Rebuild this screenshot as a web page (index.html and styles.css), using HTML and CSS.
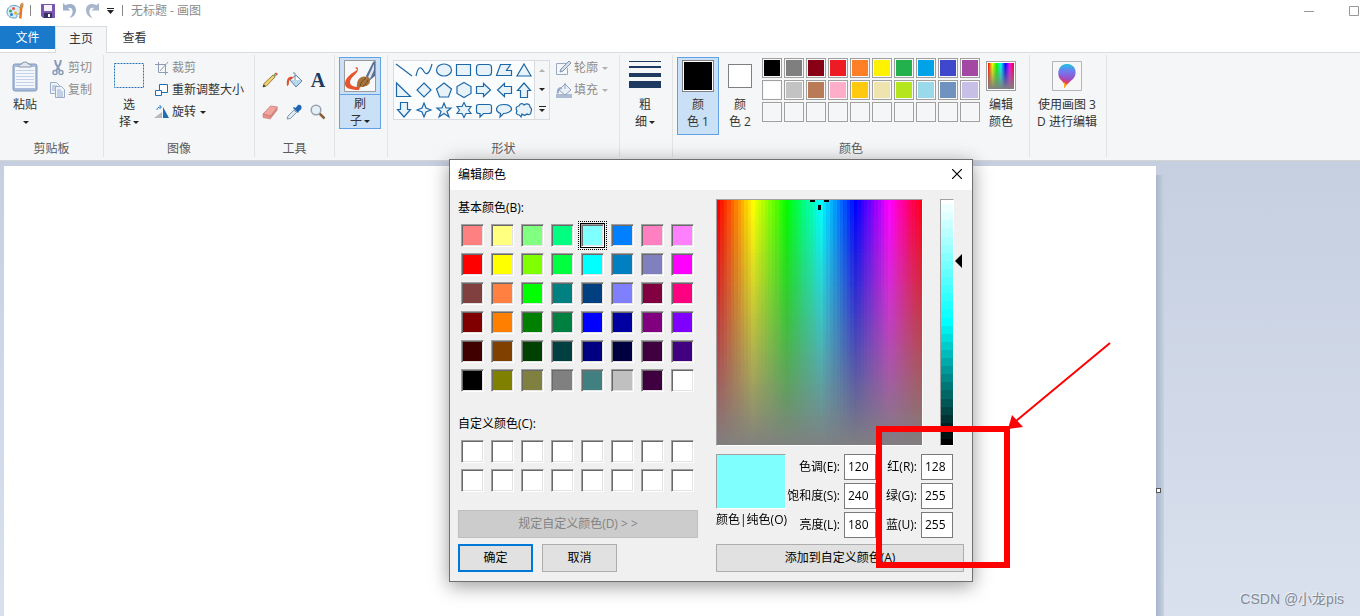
FILE: index.html
```html
<!DOCTYPE html>
<html lang="zh-CN">
<head>
    <meta charset="UTF-8">
    <meta name="viewport" content="width=device-width, initial-scale=1.0">
    <title>无标题 - 画图</title>
    <link rel="stylesheet" href="styles.css">
</head>
<body>
    <header class="titlebar">
        <svg class="app-icon" width="18" height="18" viewBox="0 0 18 18">
            <path d="M1 10C1 5.500 5 3 9 3.500c3.500.3 6 2.500 6 5.500 0 2-1.500 3-3 3-1.500.2-1.500 1-1 2 .3 1.500-1 2-3 2-4 0-7-2.500-7-6z" fill="#d7ecf8" stroke="#5f9cc4"/>
            <circle cx="4.500" cy="9" r="1.500" fill="#3aa657"/><circle cx="7.500" cy="6.500" r="1.500" fill="#e5533d"/>
            <circle cx="5.500" cy="12.500" r="1.500" fill="#2f7fd0"/><circle cx="9.500" cy="11" r="1.500" fill="#eab02d"/>
            <path d="M14 6l-1 10 2.500 1 1-11z" fill="#e57a22"/><path d="M13.500 6c0-3 1-5 3.500-5.500.8 2 .6 4-.2 5.500z" fill="#c98f55"/>
        </svg>
        <span class="title-sep"></span>
        <button class="quick" aria-label="保存">
            <svg width="14" height="14" viewBox="0 0 14 14"><path d="M0 0h14v14H2l-2-2z" fill="#7a57b0"/><path d="M3 1h8v6H3z" fill="#f4f1fa"/><path d="M3 9h8v5H3z" fill="#3a3060"/><path d="M7 10h2v3H7z" fill="#fff"/></svg>
        </button>
        <button class="quick" aria-label="撤消">
            <svg width="14" height="15" viewBox="0 0 14 15"><path d="M0 0l2.500 2.300C7-.5 13 1 13 7c0 4-2.500 7-6.500 8C9 12 10 10 9.500 7.500 9 5 6.500 4.500 5 5l2.500 2.500H0z" fill="#9fb0cd"/></svg>
        </button>
        <button class="quick" aria-label="重做">
            <svg width="14" height="15" viewBox="0 0 14 15"><path d="M14 0l-2.500 2.300C7-.5 1 1 1 7c0 4 2.500 7 6.500 8C5 12 4 10 4.500 7.500 5 5 7.500 4.500 9 5L6.500 7.500H14z" fill="#a9b6cc"/></svg>
        </button>
        <button class="quick quick-menu" aria-label="自定义快速访问工具栏">
            <svg width="7" height="6" viewBox="0 0 7 6"><path d="M0 0h7v1H0zM0 2h7L3.500 6z" fill="#222"/></svg>
        </button>
        <span class="title-sep"></span>
        <span class="window-title">无标题 - 画图</span>
        <div class="window-buttons">
            <button aria-label="最小化"><svg width="10" height="10" viewBox="0 0 10 10"><path d="M0 5h10v1H0z" fill="#999"/></svg></button>
            <button aria-label="最大化"><svg width="10" height="10" viewBox="0 0 10 10"><path d="M.5.5h9v9h-9z" fill="none" stroke="#999"/></svg></button>
        </div>
    </header>

    <nav class="tabs">
        <button class="tab tab-file">文件</button>
        <button class="tab tab-active">主页</button>
        <button class="tab">查看</button>
    </nav>

    <div class="ribbon">
        <section class="group group-clipboard">
            <div class="group-content">
                <button class="large">
                    <span class="large-icon">
                        <svg width="26" height="31" viewBox="0 0 26 31">
                            <rect x="1" y="3" width="24" height="27" rx="2" fill="#a9bbd8" stroke="#8199bf"/>
                            <path d="M3 6h20v21H3z" fill="#f3f7fc"/>
                            <path d="M4 9.500h18M4 12.500h18M4 15.500h18M4 18.500h18M4 21.500h18M4 24.500h18" stroke="#c3d2e7"/>
                            <path d="M7 6V4q0-1 3-1 0-2 3-2t3 2q3 0 3 1v2z" fill="#dfe6ef" stroke="#8696ae"/>
                        </svg>
                    </span>
                    粘贴<br><span class="caret"></span>
                </button>
                <div class="stack">
                    <button class="small" disabled>
                        <svg width="16" height="16" viewBox="0 0 16 16" fill="none" stroke="#8b9bb5"><path d="M5 0l1 4 4 7M11 0l-1 4-4 7" stroke-width="2"/><circle cx="5" cy="12.500" r="2" stroke-width="1.500"/><circle cx="11" cy="12.500" r="2" stroke-width="1.500"/></svg>
                        剪切
                    </button>
                    <button class="small" disabled>
                        <svg width="16" height="16" viewBox="0 0 16 16" fill="#eef3fa" stroke="#9aaccb"><path d="M.5.5h6l3 3v8h-9z"/><path d="M2 4h5M2 6h5M2 8h5"/><path d="M5.500 4.500h6l3 3v8h-9z"/><path d="M7 8h4M7 10h6M7 12h6M7 14h6"/></svg>
                        复制
                    </button>
                </div>
            </div>
            <h2 class="group-name">剪贴板</h2>
        </section>

        <section class="group group-image">
            <div class="group-content">
                <button class="large">
                    <span class="large-icon"><svg width="30" height="26" viewBox="0 0 30 26"><path d="M.5.5h29v24H.5z" fill="none" stroke="#2a74b4" stroke-dasharray="2 1"/></svg></span>
                    选<br>择<span class="caret"></span>
                </button>
                <div class="stack">
                    <button class="small" disabled>
                        <svg width="16" height="16" viewBox="0 0 16 16" fill="none" stroke="#8e9db5"><path d="M4.500 2v10.500H14M1 4.500h10.500V15M6 11l8-9"/></svg>
                        裁剪
                    </button>
                    <button class="small">
                        <svg width="16" height="16" viewBox="0 0 16 16" fill="#fff" stroke="#1f6fb3"><path d="M5.500 2.500h8v8h-8z"/><path d="M1.500 8.500h6v5h-6z"/></svg>
                        重新调整大小
                    </button>
                    <button class="small">
                        <svg width="16" height="16" viewBox="0 0 16 16"><path d="M0 14h8V8z" fill="#b4b9bf"/><path d="M9 3v11h6z" fill="#1f6fb3"/><path d="M3 6c0-2 1-3 4-3M5.500 1l2 2-2 2" fill="none" stroke="#2a82c9"/></svg>
                        旋转<span class="caret"></span>
                    </button>
                </div>
            </div>
            <h2 class="group-name">图像</h2>
        </section>

        <section class="group group-tools">
            <div class="tool-grid">
                <button aria-label="铅笔">
                    <svg width="16" height="16" viewBox="0 0 16 16"><path d="M1 15l1-3.500L11 3l2 2-8.500 9z" fill="#f0cf6b" stroke="#7a6a3a" stroke-width=".8"/><path d="M12.500 1.500l2 2L16 2l-2-1.500z" fill="#d9534a"/><path d="M11 3l2 2 1.500-1.500-2-2z" fill="#7fae6a"/><path d="M1 15l.8-2.500 1.700 1.700z" fill="#222"/></svg>
                </button>
                <button aria-label="用颜色填充">
                    <svg width="17" height="17" viewBox="0 0 17 17"><path d="M4 8l6-5 6 6-6 6z" fill="#b9d6ea" stroke="#5e87ab"/><path d="M5 8l5-4 4 4z" fill="#fff"/><path d="M9 8V1H7" fill="none" stroke="#7b8ea3"/><path d="M7 5C3 4 0 6 1 14c1.500 0 2-2 2-4 0-2 1.500-3 3-3z" fill="#e8502a"/></svg>
                </button>
                <button aria-label="文本">
                    <span class="text-tool">A</span>
                </button>
                <button aria-label="橡皮擦">
                    <svg width="16" height="16" viewBox="0 0 16 16"><path d="M1 10L8.500 2l7 1-7 9z" fill="#f0a6a0" stroke="#c66e69" stroke-width=".7"/><path d="M1 10l7.500 2v3L1 13.500z" fill="#e88e89" stroke="#c66e69" stroke-width=".5"/><path d="M8.500 12l7-9v3l-7 9z" fill="#d3807c"/></svg>
                </button>
                <button aria-label="颜色选取器">
                    <svg width="16" height="16" viewBox="0 0 16 16"><path d="M1 15l1-3 6-6 2.500 2.500-6 6z" fill="#dceaf5" stroke="#6d8294" stroke-width=".8"/><path d="M7 4l5 5 1-2c4-2 3-7-1-6L9.500 4 8 3z" fill="#1d66b1"/></svg>
                </button>
                <button aria-label="放大镜">
                    <svg width="16" height="16" viewBox="0 0 16 16"><path d="M9.500 9.500l5 5" stroke="#8a6239" stroke-width="2.500"/><circle cx="6" cy="6" r="4.800" fill="#e3f0fa" stroke="#9aa3ad" stroke-width="1.500"/></svg>
                </button>
            </div>
            <h2 class="group-name">工具</h2>
        </section>

        <section class="group group-brush">
            <button class="brush">
                <span class="brush-top">
                    <svg width="32" height="32" viewBox="0 0 32 32">
                        <path d="M.5.5h31v31H.5z" fill="#f6f8fa" stroke="#9a9a9a"/>
                        <path d="M11 8c1 0 2 1 2 2-5 3-11 7-12 13-.5 5 5 7 14 7l1-3c-6 0-10-1-10-5 0-5 8-8 8-13 0-2-2-2-3-1z" fill="#e9532b"/>
                        <path d="M22 16L29 2l2-1v15l-6 5z" fill="#5c7096"/><path d="M24 17l6-13v6l-4 9z" fill="#dce5f0"/>
                        <path d="M13 27c-1-8 5-13 12-9 3 5-1 10-12 9z" fill="#a9743c"/><path d="M16 26c1-4 3-6 6-8M19 26c2-1 4-3 5-6" fill="none" stroke="#6e4a22"/>
                    </svg>
                </span>
                <span class="brush-label">刷<br>子<span class="caret"></span></span>
            </button>
        </section>

        <section class="group group-shapes">
            <div class="group-content">
                <div class="shape-box">
                    <div class="shape-grid">
                        <button aria-label="直线"><svg class="shape" viewBox="0 0 18 18"><path d="M1 3l16 12"/></svg></button>
                        <button aria-label="曲线"><svg class="shape" viewBox="0 0 18 18"><path class="open" d="M1 15C3 6 5 5 8 9c3 6 6 5 9-6"/></svg></button>
                        <button aria-label="椭圆形"><svg class="shape" viewBox="0 0 18 18"><ellipse cx="9" cy="9" rx="7.500" ry="6"/></svg></button>
                        <button aria-label="矩形"><svg class="shape" viewBox="0 0 18 18"><path d="M1.500 3.500h14v11h-14z"/></svg></button>
                        <button aria-label="圆角矩形"><svg class="shape" viewBox="0 0 18 18"><rect x="1.500" y="3.500" width="15" height="11" rx="3"/></svg></button>
                        <button aria-label="多边形"><svg class="shape" viewBox="0 0 18 18"><path d="M5.500 3.500h10l-4 6h5v5h-15z"/></svg></button>
                        <button aria-label="三角形"><svg class="shape" viewBox="0 0 18 18"><path d="M9 3l7 12H2z"/></svg></button>
                        <button aria-label="直角三角形"><svg class="shape" viewBox="0 0 18 18"><path d="M1.500 2v13.500h14z"/></svg></button>
                        <button aria-label="菱形"><svg class="shape" viewBox="0 0 18 18"><path d="M9 2l7 7-7 7-7-7z"/></svg></button>
                        <button aria-label="五边形"><svg class="shape" viewBox="0 0 18 18"><path d="M9 2l7.500 6-3 8h-9l-3-8z"/></svg></button>
                        <button aria-label="六边形"><svg class="shape" viewBox="0 0 18 18"><path d="M9 1.500l7 4v7l-7 4-7-4v-7z"/></svg></button>
                        <button aria-label="右箭头"><svg class="shape" viewBox="0 0 18 18"><path d="M1.500 5.500h7v-3l7 6.500-7 6.500v-3h-7z"/></svg></button>
                        <button aria-label="左箭头"><svg class="shape" viewBox="0 0 18 18"><path d="M16.500 5.500h-7v-3L2.500 9l7 6.500v-3h7z"/></svg></button>
                        <button aria-label="向上箭头"><svg class="shape" viewBox="0 0 18 18"><path d="M5.500 16.500v-7h-3L9 2l6.500 7.500h-3v7z"/></svg></button>
                        <button aria-label="向下箭头"><svg class="shape" viewBox="0 0 18 18"><path d="M5.500 1.500v7h-3L9 16l6.500-7.500h-3v-7z"/></svg></button>
                        <button aria-label="四角星形"><svg class="shape" viewBox="0 0 18 18"><path d="M9 2l2 5 5 2-5 2-2 5-2-5-5-2 5-2z"/></svg></button>
                        <button aria-label="五角星形"><svg class="shape" viewBox="0 0 18 18"><path d="M9 2l2 5h5l-4 3.500 2 5.500-5-3.500L4 16l2-5.500L2 7h5z"/></svg></button>
                        <button aria-label="六角星形"><svg class="shape" viewBox="0 0 18 18"><path d="M9 1.500l2 4h5L13.500 9l2.500 3.500h-5l-2 4-2-4H2L4.500 9 2 5.500h5z"/></svg></button>
                        <button aria-label="圆角矩形标注"><svg class="shape" viewBox="0 0 18 18"><path d="M4 3.500h10q2.500 0 2.500 2v5q0 2-2.500 2H8.500L5 16v-3.500H4q-2.500 0-2.500-2v-5q0-2 2.500-2z"/></svg></button>
                        <button aria-label="椭圆形标注"><svg class="shape" viewBox="0 0 18 18"><path d="M5 16l.5-3.500C-1 10 1 3.500 9 3.500s10 6 4 8c-2 1-3 1-4.500 1z"/></svg></button>
                        <button aria-label="云形标注"><svg class="shape" viewBox="0 0 18 18"><path d="M4 14c-3 0-3-3-2-4-2-3 0-5 2-5 1-3 4-3 5-1 3-2 6-1 6 2 3 2 1 4 1 5 0 3-3 3-4 2-2 2-4 1-5 0l-1 3-1.500-2z"/></svg></button>
                    </div>
                    <div class="shape-scroll">
                        <button aria-label="向上滚动" disabled><span class="caret caret-up"></span></button>
                        <button aria-label="向下滚动"><span class="caret"></span></button>
                        <button aria-label="更多"><span class="more-line"></span><span class="caret"></span></button>
                    </div>
                </div>
                <div class="stack">
                    <button class="small" disabled>
                        <svg width="16" height="16" viewBox="0 0 16 16"><path d="M.5 3.500h10M.5 3.500v11h11V8" fill="none" stroke="#9aaac4"/><path d="M4 12l1-3 8-8 2 2-8 8z" fill="#d5deeb" stroke="#8193b1"/></svg>
                        轮廓<span class="caret"></span>
                    </button>
                    <button class="small" disabled>
                        <svg width="16" height="16" viewBox="0 0 16 16"><path d="M0 12h16v4H0z" fill="#aebcd2"/><path d="M3 8l6-6 6 6-6 5z" fill="#eaf0f8" stroke="#8d9fbe"/><path d="M9 7V1" stroke="#8d9fbe"/><path d="M6 5C3 5 0 6 1 12l2-1c0-3 1-4 3-4z" fill="#9aaccb"/></svg>
                        填充<span class="caret"></span>
                    </button>
                </div>
            </div>
            <h2 class="group-name">形状</h2>
        </section>

        <section class="group group-size">
            <div class="group-content">
                <button class="large">
                    <span class="large-icon"><svg width="32" height="34" viewBox="0 0 32 34"><path d="M0 2h32v1H0zM0 7h32v2H0zM0 14h32v4H0zM0 22h32v7H0z" fill="#1f3a60"/></svg></span>
                    粗<br>细<span class="caret"></span>
                </button>
            </div>
        </section>

        <section class="group group-colors">
            <div class="group-content">
                <button class="large large-selected">
                    <span class="large-icon"><span class="color-box color-one"></span></span>
                    颜<br>色 1
                </button>
                <button class="large">
                    <span class="large-icon"><span class="color-box color-two"></span></span>
                    颜<br>色 2
                </button>
                <div class="palette" id="palette"></div>
                <button class="large">
                    <span class="large-icon"><span class="rainbow"></span></span>
                    编辑<br>颜色
                </button>
            </div>
            <h2 class="group-name">颜色</h2>
        </section>

        <section class="group group-paint3d">
            <div class="group-content">
                <button class="large large-wide">
                    <span class="large-icon">
                        <svg width="30" height="30" viewBox="0 0 30 30">
                            <defs>
                                <linearGradient id="drop" x1="0" y1="0" x2="0" y2="1"><stop offset="0" stop-color="#21c5e0"/><stop offset=".3" stop-color="#6f7bf0"/><stop offset=".65" stop-color="#a04bc4"/><stop offset="1" stop-color="#f5a623"/></linearGradient>
                            </defs>
                            <path d="M.5.5h29v29H.5z" fill="#f7f7f7" stroke="#b5b5b5"/>
                            <path d="M12 27c1-4 0-5-3-8C4 14 6 3 15 3s11 10 6 15c-3 3-6 5-9 9z" fill="url(#drop)"/>
                            <path d="M7 13c1 4 3 6 5 9v5c1-3 4-5 6-7-5 0-9-3-11-7z" fill="#e63462" opacity=".8"/>
                            <path d="M12 27v-6l3 3z" fill="#f7a81f"/>
                        </svg>
                    </span>
                    使用画图 3<br>D 进行编辑
                </button>
            </div>
        </section>
    </div>

    <main class="workspace">
        <div class="sheet">
            <span class="handle"></span>
        </div>
        <span class="watermark">CSDN @小龙pis</span>
    </main>

    <div class="dialog" role="dialog" aria-labelledby="dialogTitle">
        <div class="dialog-title">
            <h1 id="dialogTitle">编辑颜色</h1>
            <button class="close" aria-label="关闭">
                <svg width="10" height="10" viewBox="0 0 10 10"><path d="M0 0l10 10M10 0L0 10" stroke="#000" stroke-width="1.200"/></svg>
            </button>
        </div>
        <form class="dialog-body" id="colorForm">
            <div class="dialog-left">
                <h3>基本颜色(B):</h3>
                <div class="swatches" id="basicColors"></div>
                <h3 class="custom-heading">自定义颜色(C):</h3>
                <div class="swatches" id="customColors"></div>
                <button type="button" class="button define" disabled>规定自定义颜色(D) &gt; &gt;</button>
                <div class="dialog-actions">
                    <button type="submit" class="button button-default">确定</button>
                    <button type="button" class="button">取消</button>
                </div>
            </div>
            <div class="dialog-right">
                <div class="pickers">
                    <canvas class="sunken" id="spectrum" width="205" height="245"></canvas>
                    <canvas class="sunken" id="luminance" width="12" height="245"></canvas>
                    <span class="lum-pointer"></span>
                </div>
                <div class="values">
                    <div class="preview">
                        <div class="preview-color sunken"></div>
                        <span>颜色|纯色(O)</span>
                    </div>
                    <div class="fields">
                        <label for="hue">色调(E):</label>
                        <input type="text" id="hue" value="120">
                        <label for="red">红(R):</label>
                        <input type="text" id="red" value="128">
                        <label for="sat">饱和度(S):</label>
                        <input type="text" id="sat" value="240">
                        <label for="green">绿(G):</label>
                        <input type="text" id="green" value="255">
                        <label for="lum">亮度(L):</label>
                        <input type="text" id="lum" value="180">
                        <label for="blue">蓝(U):</label>
                        <input type="text" id="blue" value="255">
                    </div>
                </div>
                <button type="button" class="button add">添加到自定义颜色(A)</button>
            </div>
        </form>
    </div>

    <div class="mark-box"></div>
    <svg class="mark-arrow" width="104" height="88" viewBox="0 0 104 88">
        <path d="M102 1L8 79" stroke="#f00" stroke-width="2"/>
        <path d="M0 87l4-14 11 12z" fill="#f00"/>
    </svg>

    <script src="script.js"></script>
</body>
</html>
```
FILE: styles.css
```css
/* General Styles */
* {
    box-sizing: border-box;
}

body {
    font-family: "Open Sans", "Noto Sans CJK SC", sans-serif;
    font-size: 12px;
    line-height: 16px;
    margin: 0;
    height: 100vh;
    display: flex;
    flex-direction: column;
    overflow: hidden;
    background: #ffffff;
    color: #333333;
}

button {
    font: inherit;
    color: inherit;
    background: none;
    border: none;
    padding: 0;
}

h1, h2, h3 {
    font-size: 12px;
    font-weight: normal;
    margin: 0;
}

svg {
    display: block;
    flex-shrink: 0;
}

/* Title bar */
.titlebar {
    display: flex;
    align-items: center;
    height: 26px;
    padding: 0 0 5px 6px;
    gap: 8px;
}

.title-sep {
    width: 1px;
    height: 11px;
    background: #888888;
}

.app-icon {
    margin-right: -2px;
}

.quick {
    display: flex;
    justify-content: center;
    width: 14px;
}

.quick-menu {
    width: 7px;
}

.title-sep + .quick {
    margin-left: 2px;
}

.window-title {
    color: #8c8c8c;
}

.window-buttons {
    display: flex;
    gap: 35px;
    margin-left: auto;
    padding-right: 1px;
}

/* Tabs */
.tabs {
    display: flex;
    height: 27px;
    border-bottom: 1px solid #dadbdc;
}

.tab {
    width: 55px;
    height: 23px;
    padding-top: 1px;
}

.tab-file {
    background: #1979ca;
    color: #ffffff;
}

.tab-active {
    width: 52px;
    height: 27px;
    padding-bottom: 3px;
    background: #f5f6f7;
    border: 1px solid #dadbdc;
    border-bottom: none;
}

/* Ribbon */
.ribbon {
    display: flex;
    flex-shrink: 0;
    height: 108px;
    padding: 2px 0 3px;
    background: #f5f6f7;
    border-bottom: 1px solid #d2d4d6;
}

.group {
    display: flex;
    flex-direction: column;
    flex-shrink: 0;
    border-right: 1px solid #e2e3e4;
}

.group-content {
    display: flex;
    align-items: flex-start;
    gap: 8px;
    flex: 1;
    padding: 2px 0 0 8px;
}

.group-name {
    text-align: center;
    color: #5a5a5a;
}

.group-clipboard {
    width: 104px;
}

.group-image {
    width: 151px;
}

.group-tools {
    width: 80px;
}

.group-brush,
.group-size {
    width: 53px;
}

.group-shapes {
    width: 232px;
}

.group-colors {
    width: 357px;
}

.group-paint3d {
    width: 77px;
}

.large {
    width: 34px;
    line-height: 17px;
    white-space: nowrap;
}

.large-icon {
    display: flex;
    align-items: center;
    justify-content: center;
    height: 38px;
    margin-bottom: 1px;
}

.large-selected {
    padding-bottom: 5px;
    background: #c9e0f7;
    box-shadow: inset 0 0 0 1px #62a2e4;
}

.stack {
    display: flex;
    flex-direction: column;
}

.small {
    display: flex;
    align-items: center;
    gap: 2px;
    height: 22px;
    white-space: nowrap;
}

.small:disabled {
    color: #8d8d8d;
}

.caret {
    display: inline-block;
    vertical-align: middle;
    border: 3px solid transparent;
    border-top-color: #222222;
    border-bottom: none;
}

.large .caret,
.small .caret,
.brush .caret {
    margin-left: 2px;
}

:disabled .caret {
    border-top-color: #b0b0b0;
}

/* Tools */
.tool-grid {
    display: grid;
    grid-template-columns: repeat(3, 24px);
    grid-auto-rows: 32px;
    flex: 1;
    padding: 9px 0 0 3px;
}

.tool-grid button {
    display: flex;
    align-items: center;
    justify-content: center;
}

.text-tool {
    font: bold 20px "Liberation Serif", serif;
    color: #1f3a60;
}

.brush {
    width: 42px;
    height: 72px;
    margin: 2px 4px;
    background: #c9e0f7;
    border: 1px solid #62a2e4;
    line-height: 17px;
}

.brush-top {
    display: flex;
    justify-content: center;
    padding: 2px 0;
    border-bottom: 1px solid #62a2e4;
}

.brush-label {
    display: block;
}

/* Shapes */
.group-shapes .group-content {
    gap: 6px;
    padding-left: 5px;
}

.shape-box {
    display: flex;
    margin-top: 3px;
    padding-left: 1px;
    background: #fbfcfd;
    box-shadow: inset 0 0 0 1px #d9dbde;
}

.shape-grid {
    display: grid;
    grid-template-columns: repeat(7, 20px);
    grid-auto-rows: 20px;
}

.shape-grid button {
    display: flex;
    align-items: center;
    justify-content: center;
}

.shape {
    width: 18px;
    height: 18px;
    fill: #e8f3f9;
    stroke: #1d68a8;
    stroke-width: 1.2;
}

.shape .open {
    fill: none;
}

.shape-scroll {
    width: 16px;
    border: 1px solid #d9dbde;
    background: #f5f6f7;
}

.shape-scroll button {
    display: flex;
    flex-direction: column;
    align-items: center;
    justify-content: center;
    gap: 2px;
    width: 100%;
    height: 19px;
}

.more-line {
    width: 7px;
    height: 1px;
    background: #222222;
}

.caret-up {
    transform: rotate(180deg);
}

/* Colours */
.group-colors .group-content {
    gap: 0;
    padding-left: 4px;
}

.group-colors .large {
    width: 42px;
}

.color-box {
    width: 24px;
    height: 24px;
    border: 1px solid #808080;
    box-shadow: inset 0 0 0 1px #ffffff;
}

.color-one {
    width: 32px;
    height: 32px;
    background: #000000;
}

.color-two {
    background: #ffffff;
}

.palette {
    display: grid;
    grid-template-columns: repeat(10, 20px);
    grid-auto-rows: 20px;
    gap: 2px;
    margin: 1px 0 0 1px;
}

.palette button {
    border: 1px solid #a0a0a0;
    box-shadow: inset 0 0 0 1px #f9f9f9;
}

.rainbow {
    width: 30px;
    height: 30px;
    border: 1px solid #a0a0a0;
    padding: 1px;
    background: linear-gradient(transparent, #808080) content-box,
        linear-gradient(90deg, #ff0000, #ffff00, #00ff00, #00ffff, #0000ff, #ff00ff, #ff0000) content-box,
        #ffffff;
}

.group-paint3d .group-content {
    padding-left: 6px;
}

.large-wide {
    width: 62px;
}

/* Workspace */
.workspace {
    position: relative;
    flex: 1;
    min-height: 0;
    overflow: hidden;
    padding: 5px 204px 0 4px;
    background: linear-gradient(#c6cfe0, #d9e1ee);
}

.sheet {
    position: relative;
    height: 650px;
    background: #ffffff;
}

.sheet::after {
    content: "";
    position: absolute;
    top: 9px;
    bottom: -8px;
    left: 100%;
    width: 8px;
    background: linear-gradient(90deg, #a9b6ca, #c6d1e0);
}

.handle {
    position: absolute;
    z-index: 1;
    left: 100%;
    top: 322px;
    width: 5px;
    height: 5px;
    background: #ffffff;
    border: 1px solid #555555;
}

.watermark {
    position: absolute;
    right: 16px;
    bottom: 9px;
    font-family: "Liberation Sans", "Noto Sans CJK SC", sans-serif;
    font-size: 14px;
    color: #858b95;
    text-shadow: -1px -1px 0 #eef2f8;
}

/* Dialog */
.dialog {
    position: absolute;
    top: 159px;
    left: 449px;
    background: #f0f0f0;
    border: 1px solid #707070;
    box-shadow: 0 4px 18px rgba(0, 0, 0, 0.4);
    color: #000000;
}

.dialog-title {
    display: flex;
    align-items: center;
    justify-content: space-between;
    height: 30px;
    padding: 0 10px 0 8px;
    background: #ffffff;
}

.close {
    padding-bottom: 2px;
}

.dialog-body {
    display: flex;
    gap: 18px;
    padding: 9px 8px 9px 8px;
}

.dialog-left {
    width: 240px;
    padding-top: 1px;
}

.dialog-left .custom-heading {
    margin-top: 24px;
}

.swatches {
    display: grid;
    grid-template-columns: repeat(8, 23px);
    grid-auto-rows: 23px;
    gap: 6px 7px;
    margin: 8px 0 0 3px;
}

.swatches button,
.sunken {
    border: 1px solid;
    border-color: #a0a0a0 #ffffff #ffffff #a0a0a0;
}

.swatches button {
    box-shadow: inset 1px 1px 0 #696969, inset -1px -1px 0 #e3e3e3;
}

.swatches .selected {
    outline: 1px solid #000000;
    position: relative;
}

.swatches .selected::after {
    content: "";
    position: absolute;
    inset: -4px;
    border: 1px dotted #000000;
}

.button {
    height: 28px;
    background: #e1e1e1;
    border: 1px solid #adadad;
}

.button:disabled {
    background: #cccccc;
    border-color: #bfbfbf;
    color: #838383;
}

.button-default {
    border: 2px solid #0078d7;
}

.define {
    width: 100%;
    margin-top: 18px;
}

.dialog-actions {
    display: flex;
    gap: 9px;
    margin-top: 6px;
}

.dialog-actions .button {
    width: 75px;
}

.dialog-right {
    width: 248px;
}

.pickers {
    display: flex;
    align-items: flex-start;
}

.pickers canvas {
    display: block;
    box-sizing: content-box;
}

#luminance {
    margin-left: 17px;
}

.lum-pointer {
    margin: 55px 0 0 1px;
    border: 7px solid transparent;
    border-right-color: #000000;
    border-left: none;
}

.values {
    display: flex;
    margin-top: 8px;
}

.preview {
    width: 70px;
    white-space: nowrap;
}

.preview-color {
    height: 55px;
    margin-bottom: 3px;
    background: #80ffff;
}

.fields {
    display: grid;
    grid-template-columns: 58px 32px 45px 32px;
    row-gap: 3px;
    align-items: center;
}

.fields label {
    text-align: right;
    padding-right: 4px;
    white-space: nowrap;
}

.fields input {
    font: inherit;
    width: 32px;
    height: 26px;
    padding: 0 3px 2px;
    border: 1px solid #7a7a7a;
    background: #ffffff;
}

.add {
    width: 100%;
    margin-top: 6px;
}

/* Annotation over the window */
.mark-box {
    position: absolute;
    left: 876px;
    top: 426px;
    width: 134px;
    height: 142px;
    border: 6px solid #ff0000;
    pointer-events: none;
}

.mark-arrow {
    position: absolute;
    left: 1008px;
    top: 342px;
    pointer-events: none;
}
```
FILE: script.js
```js
const paletteColors = [
    '#000000', '#7f7f7f', '#880015', '#ed1c24', '#ff7f27', '#fff200', '#22b14c', '#00a2e8', '#3f48cc', '#a349a4',
    '#ffffff', '#c3c3c3', '#b97a57', '#ffaec9', '#ffc90e', '#efe4b0', '#b5e61d', '#99d9ea', '#7092be', '#c8bfe7'
];

const basicColors = [
    '#ff8080', '#ffff80', '#80ff80', '#00ff80', '#80ffff', '#0080ff', '#ff80c0', '#ff80ff',
    '#ff0000', '#ffff00', '#80ff00', '#00ff40', '#00ffff', '#0080c0', '#8080c0', '#ff00ff',
    '#804040', '#ff8040', '#00ff00', '#008080', '#004080', '#8080ff', '#800040', '#ff0080',
    '#800000', '#ff8000', '#008000', '#008040', '#0000ff', '#0000a0', '#800080', '#8000ff',
    '#400000', '#804000', '#004000', '#004040', '#000080', '#000040', '#400040', '#400080',
    '#000000', '#808000', '#808040', '#808080', '#408080', '#c0c0c0', '#400040', '#ffffff'
];

function addSwatches(id, colors, selected) {
    const box = document.getElementById(id);
    colors.forEach((color, i) => {
        const button = document.createElement('button');
        button.type = 'button';
        button.style.backgroundColor = color;
        button.setAttribute('aria-label', '颜色 ' + (i + 1));
        if (i === selected) {
            button.className = 'selected';
        }
        box.appendChild(button);
    });
}

// third row of the palette is empty
addSwatches('palette', paletteColors.concat(Array(10).fill('transparent')));
addSwatches('basicColors', basicColors, 4);
addSwatches('customColors', Array(16).fill('#ffffff'));

// Hue runs across, saturation runs down
const spectrum = document.getElementById('spectrum').getContext('2d');
const steps = 60;
for (let i = 0; i < steps; i++) {
    for (let j = 0; j < steps; j++) {
        const x = Math.round(i * 205 / steps);
        const y = Math.round(j * 245 / steps);
        spectrum.fillStyle = `hsl(${i * 360 / steps}, ${100 - j * 100 / steps}%, 50%)`;
        spectrum.fillRect(x, y, 4, 5);
    }
}

// Crosshair at the current hue
spectrum.fillStyle = '#000';
spectrum.fillRect(93, 0, 5, 2);
spectrum.fillRect(107, 0, 5, 2);
spectrum.fillRect(101, 5, 3, 5);

const luminance = document.getElementById('luminance').getContext('2d');
for (let i = 0; i <= 30; i++) {
    luminance.fillStyle = `hsl(180, 100%, ${100 - i * 100 / 30}%)`;
    luminance.fillRect(0, Math.round(i * 8.1) - 4, 12, 9);
}

document.getElementById('colorForm').addEventListener('submit', (event) => {
    event.preventDefault();
});
```
